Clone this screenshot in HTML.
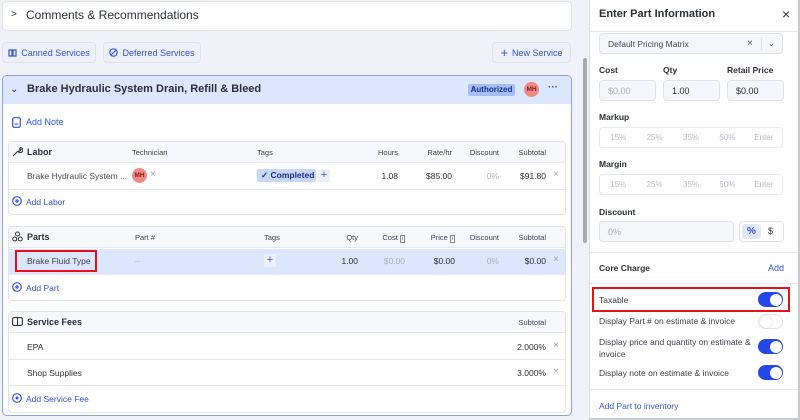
<!DOCTYPE html>
<html><head><style>
*{box-sizing:border-box;margin:0;padding:0}
body{width:800px;height:420px;overflow:hidden;background:#f1f2f8;font-family:"Liberation Sans",sans-serif;color:#2b2f3a;position:relative;font-size:8.5px}
.a{position:absolute}
.card{position:absolute;background:#fff;border:1px solid #e2e4ec;border-radius:4px}
.btn{position:absolute;background:#eef0f7;border:1px solid #dfe2ec;border-radius:4px;color:#3452e8;font-size:9px;display:flex;align-items:center;justify-content:center;gap:4px}
.blue{color:#3452e8}
.th{font-size:7.5px;color:#3a3f4b}
.r{text-align:right}
.gray{color:#aab0bd}
.x{color:#9aa0ad;font-size:10px}
.inp{position:absolute;border:1px solid #dfe2ea;border-radius:4px;background:#f5f6fa;font-size:9px;display:flex;align-items:center;padding-left:8px}
.lbl{position:absolute;font-size:8.5px;font-weight:bold;color:#2b2f3a}
.chips{position:absolute;border:1px solid #e7e9ef;border-radius:4px;display:flex;align-items:center;color:#b8bcc7;font-size:8px}
.chips span{flex:1;text-align:center}
.tog{position:absolute;width:25px;height:15px;border-radius:8px;background:#2447e6}
.tog::after{content:"";position:absolute;right:1.5px;top:1.5px;width:12px;height:12px;border-radius:50%;background:#fff}
.tog.off{background:#fff;border:1px solid #dfe2ea}
.tog.off::after{left:1px;top:1px;right:auto;box-shadow:0 0 1px #999}
.hline{position:absolute;height:1px;background:#e6e8ee}
.av{position:absolute;width:15px;height:15px;border-radius:50%;background:#f08a84;color:#8a1d1d;font-size:6.5px;font-weight:bold;display:flex;align-items:center;justify-content:center}
</style></head><body>
<div class="card" style="left:2px;top:1px;width:570px;height:30px"></div>
<div class="a" style="left:11px;top:9px;font-size:10px">&gt;</div>
<div class="a" style="left:26px;top:8px;font-size:12px;color:#2b2f3a">Comments &amp; Recommendations</div>
<div class="btn" style="left:2px;top:42px;width:94px;height:21px"><svg width="9" height="8" viewBox="0 0 9 8"><path d="M1 1h3v6H1zM5 1h3v6H5z" fill="none" stroke="#3452e8" stroke-width="1.2"/></svg>Canned Services</div>
<div class="btn" style="left:103px;top:42px;width:98px;height:21px"><svg width="9" height="9" viewBox="0 0 9 9"><circle cx="4.5" cy="4.5" r="3.7" fill="none" stroke="#3452e8" stroke-width="1.2"/><path d="M2 7L7 2" stroke="#3452e8" stroke-width="1.2"/></svg>Deferred Services</div>
<div class="btn" style="left:492px;top:42px;width:79px;height:21px"><span style="font-size:13px">+</span>New Service</div>
<div class="a" style="left:2px;top:75px;width:570px;height:341px;background:#fff;border:1.5px solid #8d9ef5;border-radius:5px;overflow:hidden">
 <div class="a" style="left:0;top:0;width:100%;height:28px;background:#dce6fd"></div>
</div>
<div class="a" style="left:10px;top:84px;font-size:10px">&#8964;</div>
<div class="a" style="left:27px;top:83px;font-size:11px;font-weight:bold;color:#2b2f3a">Brake Hydraulic System Drain, Refill &amp; Bleed</div>
<div class="a" style="left:468px;top:84px;width:47px;height:12px;background:#a5bef9;border-radius:2px;color:#1c2f85;font-size:8px;font-weight:bold;text-align:center;line-height:12px">Authorized</div>
<div class="av" style="left:524px;top:82px">MH</div>
<div class="a blue" style="left:548px;top:82px;font-size:10px;font-weight:bold">···</div>
<svg class="a" style="left:12px;top:117px" width="9" height="11"><rect x="0.7" y="0.7" width="7.6" height="9.6" rx="1.5" fill="none" stroke="#3452e8" stroke-width="1.2"/><path d="M2.5 7h4" stroke="#3452e8"/></svg>
<div class="a blue" style="left:26px;top:117px;font-size:9px">Add Note</div>

<div class="card" style="left:8px;top:141px;width:558px;height:74px;overflow:hidden"><div class="a" style="left:0;top:0;width:100%;height:21px;background:#f7f8fb;border-bottom:1px solid #e6e8ee"></div><div class="a" style="left:0;top:47px;width:100%;height:1px;background:#e6e8ee"></div></div>
<svg class="a" style="left:12px;top:146px" width="11" height="11" viewBox="0 0 11 11"><path d="M1 10L6 5M6 5a2.5 2.5 0 1 0 2.5-3.5L7.5 3 8 4l1-.5A2.5 2.5 0 0 1 6 5" fill="none" stroke="#333" stroke-width="1.1"/></svg>
<div class="a" style="left:27px;top:147px;font-size:9px;font-weight:bold">Labor</div>
<div class="a th" style="left:132px;top:148px">Technician</div>
<div class="a th" style="left:257px;top:148px">Tags</div>
<div class="a th r" style="left:340px;top:148px;width:58px">Hours</div>
<div class="a th r" style="left:400px;top:148px;width:52px">Rate/hr</div>
<div class="a th r" style="left:450px;top:148px;width:49px">Discount</div>
<div class="a th r" style="left:500px;top:148px;width:46px">Subtotal</div>
<div class="a" style="left:27px;top:171px;color:#454a55">Brake Hydraulic System ...</div>
<div class="av" style="left:132px;top:168px">MH</div>
<div class="a x" style="left:150px;top:169px">×</div>
<div class="a" style="left:257px;top:169px;width:59px;height:13px;background:#c8d8fb;border-radius:2px;color:#1c2f85;font-size:8.5px;font-weight:bold;line-height:13px;padding-left:4px">✓ Completed</div>
<div class="a blue" style="left:318px;top:169px;width:12px;height:13px;background:#eef0f7;text-align:center;font-size:11px;line-height:13px">+</div>
<div class="a r" style="left:340px;top:171px;width:58px">1.08</div>
<div class="a r" style="left:400px;top:171px;width:52px">$85.00</div>
<div class="a r gray" style="left:450px;top:171px;width:49px">0%</div>
<div class="a r" style="left:500px;top:171px;width:46px">$91.80</div>
<div class="a x" style="left:553px;top:169px">×</div>
<svg class="a" style="left:12px;top:196px" width="10" height="10"><circle cx="5" cy="5" r="4.3" fill="none" stroke="#3452e8" stroke-width="1.2"/><path d="M5 3v4M3 5h4" stroke="#3452e8" stroke-width="1.2"/></svg>
<div class="a blue" style="left:26px;top:197px">Add Labor</div>

<div class="card" style="left:8px;top:226px;width:558px;height:75px;overflow:hidden"><div class="a" style="left:0;top:0;width:100%;height:21px;background:#f7f8fb;border-bottom:1px solid #e6e8ee"></div><div class="a" style="left:0;top:22px;width:100%;height:26px;background:#dce6fd;border-bottom:1px solid #e6e8ee"></div></div>
<svg class="a" style="left:12px;top:231px" width="11" height="11" viewBox="0 0 11 11"><circle cx="5.5" cy="3" r="2" fill="none" stroke="#333"/><circle cx="2.7" cy="8" r="2" fill="none" stroke="#333"/><circle cx="8.3" cy="8" r="2" fill="none" stroke="#333"/></svg>
<div class="a" style="left:27px;top:232px;font-weight:bold;font-size:9px">Parts</div>
<div class="a th" style="left:135px;top:233px">Part #</div>
<div class="a th" style="left:264px;top:233px">Tags</div>
<div class="a th r" style="left:320px;top:233px;width:38px">Qty</div>
<div class="a th r" style="left:360px;top:233px;width:45px">Cost <span style="border:1px solid #888;font-size:5px;padding:0 1px">i</span></div>
<div class="a th r" style="left:410px;top:233px;width:45px">Price <span style="border:1px solid #888;font-size:5px;padding:0 1px">i</span></div>
<div class="a th r" style="left:450px;top:233px;width:49px">Discount</div>
<div class="a th r" style="left:500px;top:233px;width:46px">Subtotal</div>
<div class="a" style="left:15px;top:250px;width:82px;height:22px;border:2.5px solid #e8101b"></div>
<div class="a" style="left:27px;top:256px;color:#3a3f4b">Brake Fluid Type</div>
<div class="a gray" style="left:135px;top:256px">–</div>
<div class="a blue" style="left:264px;top:254px;width:12px;height:13px;background:#eef0f7;text-align:center;font-size:11px;line-height:13px">+</div>
<div class="a r" style="left:320px;top:256px;width:38px">1.00</div>
<div class="a r gray" style="left:360px;top:256px;width:45px">$0.00</div>
<div class="a r" style="left:410px;top:256px;width:45px">$0.00</div>
<div class="a r gray" style="left:450px;top:256px;width:49px">0%</div>
<div class="a r" style="left:500px;top:256px;width:46px">$0.00</div>
<div class="a x" style="left:553px;top:254px">×</div>
<svg class="a" style="left:12px;top:282px" width="10" height="10"><circle cx="5" cy="5" r="4.3" fill="none" stroke="#3452e8" stroke-width="1.2"/><path d="M5 3v4M3 5h4" stroke="#3452e8" stroke-width="1.2"/></svg>
<div class="a blue" style="left:26px;top:283px">Add Part</div>

<div class="card" style="left:8px;top:311px;width:558px;height:102px;overflow:hidden"><div class="a" style="left:0;top:0;width:100%;height:21px;background:#f7f8fb;border-bottom:1px solid #e6e8ee"></div><div class="a" style="left:0;top:47px;width:100%;height:1px;background:#e6e8ee"></div><div class="a" style="left:0;top:73px;width:100%;height:1px;background:#e6e8ee"></div></div>
<svg class="a" style="left:12px;top:317px" width="11" height="9"><rect x="0.6" y="0.6" width="9.8" height="7.8" rx="1.5" fill="none" stroke="#333" stroke-width="1.1"/><path d="M5.5 1v7" stroke="#333"/></svg>
<div class="a" style="left:27px;top:317px;font-weight:bold;font-size:9px">Service Fees</div>
<div class="a th r" style="left:500px;top:318px;width:46px">Subtotal</div>
<div class="a" style="left:27px;top:342px">EPA</div>
<div class="a r" style="left:490px;top:342px;width:56px">2.000%</div>
<div class="a x" style="left:553px;top:340px">×</div>
<div class="a" style="left:27px;top:368px">Shop Supplies</div>
<div class="a r" style="left:490px;top:368px;width:56px">3.000%</div>
<div class="a x" style="left:553px;top:366px">×</div>
<svg class="a" style="left:12px;top:393px" width="10" height="10"><circle cx="5" cy="5" r="4.3" fill="none" stroke="#3452e8" stroke-width="1.2"/><circle cx="5" cy="5" r="1.5" fill="#3452e8"/></svg>
<div class="a blue" style="left:26px;top:394px">Add Service Fee</div>

<div class="a" style="left:583px;top:58px;width:4px;height:185px;background:#a9abb0;border-radius:2px"></div>

<div class="a" style="left:589px;top:0;width:211px;height:420px;background:#fff;border-left:1px solid #dcdfe6;border-right:2px solid #c8cbd2;border-bottom:2px solid #c8cbd2"></div>
<div class="a" style="left:599px;top:8px;font-size:11px;font-weight:bold">Enter Part Information</div>
<div class="a" style="left:782px;top:6px;font-size:14px">×</div>
<div class="hline" style="left:590px;top:31px;width:208px"></div>
<div class="inp" style="left:599px;top:33px;width:184px;height:21px;font-size:8.5px;color:#454a55">Default Pricing Matrix<span style="position:absolute;left:147px;color:#555;font-size:10px">×</span><span style="position:absolute;left:161px;top:4px;width:1px;height:12px;background:#ddd"></span><span style="position:absolute;left:168px;font-size:8px">&#8964;</span></div>
<div class="lbl" style="left:599px;top:65px">Cost</div>
<div class="lbl" style="left:663px;top:65px">Qty</div>
<div class="lbl" style="left:727px;top:65px">Retail Price</div>
<div class="inp gray" style="left:599px;top:80px;width:57px;height:21px">$0.00</div>
<div class="inp" style="left:663px;top:80px;width:57px;height:21px">1.00</div>
<div class="inp" style="left:727px;top:80px;width:57px;height:21px">$0.00</div>
<div class="lbl" style="left:599px;top:112px">Markup</div>
<div class="chips" style="left:599px;top:127px;width:184px;height:21px"><span>15%</span><span>25%</span><span>35%</span><span>50%</span><span>Enter</span></div>
<div class="lbl" style="left:599px;top:159px">Margin</div>
<div class="chips" style="left:599px;top:174px;width:184px;height:21px"><span>15%</span><span>25%</span><span>35%</span><span>50%</span><span>Enter</span></div>
<div class="lbl" style="left:599px;top:207px">Discount</div>
<div class="inp gray" style="left:599px;top:221px;width:135px;height:21px">0%</div>
<div class="a" style="left:739px;top:221px;width:45px;height:21px;border:1px solid #dfe2ea;border-radius:4px"></div>
<div class="a blue" style="left:742px;top:224px;width:19px;height:15px;background:#e3e9fb;border-radius:3px;text-align:center;font-weight:bold;font-size:10px;line-height:15px">%</div>
<div class="a" style="left:768px;top:226px;font-size:9px">$</div>
<div class="hline" style="left:590px;top:252px;width:208px"></div>
<div class="lbl" style="left:599px;top:263px">Core Charge</div>
<div class="a blue" style="left:768px;top:263px;font-size:9px">Add</div>
<div class="hline" style="left:590px;top:283px;width:208px"></div>
<div class="a" style="left:592px;top:287px;width:198px;height:25px;border:2.5px solid #e8101b"></div>
<div class="a" style="left:599px;top:295px;color:#3a3f4b">Taxable</div>
<div class="tog" style="left:758px;top:292px"></div>
<div class="a" style="left:599px;top:316px;color:#3a3f4b">Display Part # on estimate &amp; invoice</div>
<div class="tog off" style="left:758px;top:314px"></div>
<div class="a" style="left:599px;top:336px;color:#3a3f4b;width:158px;line-height:12px">Display price and quantity on estimate &amp; invoice</div>
<div class="tog" style="left:758px;top:339px"></div>
<div class="a" style="left:599px;top:368px;color:#3a3f4b">Display note on estimate &amp; invoice</div>
<div class="tog" style="left:758px;top:365px"></div>
<div class="hline" style="left:590px;top:389px;width:208px"></div>
<div class="a blue" style="left:599px;top:401px">Add Part to inventory</div>
</body></html>
